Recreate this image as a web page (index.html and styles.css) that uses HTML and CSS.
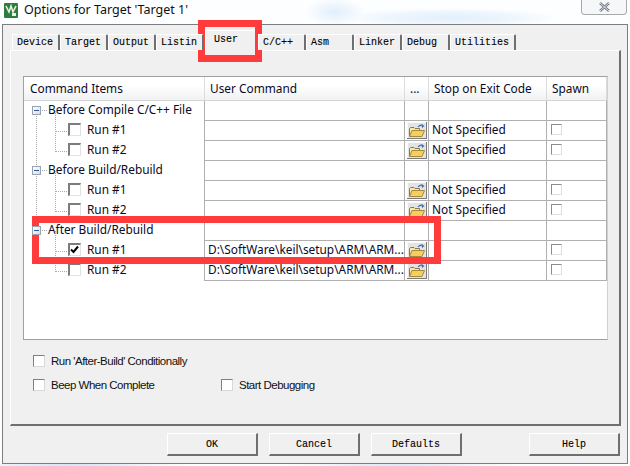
FILE: index.html
```html
<!DOCTYPE html>
<html lang="en">
<head>
<meta charset="utf-8">
<title>Options for Target</title>
<link rel="stylesheet" href="styles.css">
</head>
<body>
<svg width="0" height="0" class="defs">
  <symbol id="folder" viewBox="0 0 20 17">
    <rect x="0.5" y="0.5" width="19" height="16" fill="#e4e4e4"/>
    <path d="M0 0.5H20M0.5 0V17" stroke="#fafafa" stroke-width="1" fill="none"/>
    <path d="M19.5 0V17M0 16.5H20" stroke="#7a7a7a" stroke-width="1" fill="none"/>
    <path d="M2.5 14.5V6.5L3.5 5.5H7L8 6.5H12.5V8.5" fill="#f8e8a8" stroke="#8a7a4a"/>
    <path d="M2.5 14.5L5 8.5H17.5L15 14.5Z" fill="#f6cf5e" stroke="#a58a3e"/>
    <path d="M11 5Q13 2.5 16 3.5" fill="none" stroke="#3d6fb4" stroke-width="1.2"/>
    <path d="M14.5 2L17.5 4L15 6Z" fill="#3d6fb4"/>
  </symbol>
</svg>

<div class="titlebar">
  <svg class="app-icon" width="14" height="15" viewBox="0 0 14 15">
    <rect width="14" height="15" rx="1" fill="#2c7d3f"/>
    <path d="M2 3L5 9L7 3L9 9L12 3" fill="none" stroke="#e8f4e0" stroke-width="1.6"/>
    <rect x="8" y="10" width="4" height="3" fill="#e8f4e0"/>
  </svg>
  <span class="title">Options for Target 'Target 1'</span>
  <span class="close">
    <svg width="11" height="10" viewBox="0 0 11 10"><path d="M1 1L10 9M10 1L1 9" stroke="#6d7680" stroke-width="2.4"/><path d="M1 1L10 9M10 1L1 9" stroke="#fff" stroke-width="0.8"/></svg>
  </span>
</div>

<main class="dialog">
  <nav class="tabs">
    <span class="tab">Device</span>
    <span class="tab">Target</span>
    <span class="tab">Output</span>
    <span class="tab">Listin</span>
    <span class="tab active">User</span>
    <span class="tab">C/C++</span>
    <span class="tab">Asm</span>
    <span class="tab">Linker</span>
    <span class="tab">Debug</span>
    <span class="tab wide">Utilities</span>
  </nav>

  <section class="panel">
    <div class="grid-box">
      <div class="row head">
        <div class="c c1">Command Items</div>
        <div class="c c2">User Command</div>
        <div class="c c3">...</div>
        <div class="c c4">Stop on Exit Code</div>
        <div class="c c5">Spawn</div>
      </div>
      <span class="trunk"></span>

      <div class="row">
        <div class="c c1 group"><span class="exp"></span>Before Compile C/C++ File</div>
        <div class="c c2"></div><div class="c c3"></div><div class="c c4"></div><div class="c c5"></div>
      </div>
      <div class="row">
        <div class="c c1 item first"><span class="cb"></span>Run #1</div>
        <div class="c c2"></div>
        <div class="c c3"><svg class="fld"><use href="#folder"/></svg></div>
        <div class="c c4">Not Specified</div>
        <div class="c c5"><span class="scb"></span></div>
      </div>
      <div class="row">
        <div class="c c1 item"><span class="cb"></span>Run #2</div>
        <div class="c c2"></div>
        <div class="c c3"><svg class="fld"><use href="#folder"/></svg></div>
        <div class="c c4">Not Specified</div>
        <div class="c c5"><span class="scb"></span></div>
      </div>

      <div class="row">
        <div class="c c1 group"><span class="exp"></span>Before Build/Rebuild</div>
        <div class="c c2"></div><div class="c c3"></div><div class="c c4"></div><div class="c c5"></div>
      </div>
      <div class="row">
        <div class="c c1 item first"><span class="cb"></span>Run #1</div>
        <div class="c c2"></div>
        <div class="c c3"><svg class="fld"><use href="#folder"/></svg></div>
        <div class="c c4">Not Specified</div>
        <div class="c c5"><span class="scb"></span></div>
      </div>
      <div class="row">
        <div class="c c1 item"><span class="cb"></span>Run #2</div>
        <div class="c c2"></div>
        <div class="c c3"><svg class="fld"><use href="#folder"/></svg></div>
        <div class="c c4">Not Specified</div>
        <div class="c c5"><span class="scb"></span></div>
      </div>

      <div class="row">
        <div class="c c1 group"><span class="exp"></span>After Build/Rebuild</div>
        <div class="c c2"></div><div class="c c3"></div><div class="c c4"></div><div class="c c5"></div>
      </div>
      <div class="row">
        <div class="c c1 item first"><span class="cb checked"><svg width="9" height="9" viewBox="0 0 9 9"><path d="M1 4.5L3.5 7L8 1.5" fill="none" stroke="#000" stroke-width="2"/></svg></span>Run #1</div>
        <div class="c c2">D:\SoftWare\keil\setup\ARM\ARM...</div>
        <div class="c c3"><svg class="fld"><use href="#folder"/></svg></div>
        <div class="c c4"></div>
        <div class="c c5"><span class="scb"></span></div>
      </div>
      <div class="row">
        <div class="c c1 item"><span class="cb"></span>Run #2</div>
        <div class="c c2">D:\SoftWare\keil\setup\ARM\ARM...</div>
        <div class="c c3"><svg class="fld"><use href="#folder"/></svg></div>
        <div class="c c4"></div>
        <div class="c c5"><span class="scb"></span></div>
      </div>
    </div>

    <div class="options">
      <label class="opt"><span class="ocb"></span>Run 'After-Build' Conditionally</label>
      <div class="opt-row">
        <label class="opt beep"><span class="ocb"></span>Beep When Complete</label>
        <label class="opt"><span class="ocb"></span>Start Debugging</label>
      </div>
    </div>
  </section>

  <footer class="buttons">
    <button class="btn">OK</button>
    <button class="btn">Cancel</button>
    <button class="btn">Defaults</button>
    <button class="btn help">Help</button>
  </footer>
</main>

<span class="mark mark-tab"></span>
<span class="mark mark-row"></span>
</body>
</html>
```
FILE: styles.css
```css
* { box-sizing: border-box; }
html, body { margin: 0; padding: 0; }
body {
  position: relative;
  width: 630px;
  height: 466px;
  overflow: hidden;
  background-color: #fdfeff;
  background-image:
    radial-gradient(ellipse 110px 10px at 450px 18px, #e2effc 0%, #eef6fd 60%, transparent 100%),
    radial-gradient(ellipse 30px 14px at 335px 12px, #e0eefb 0%, transparent 100%),
    radial-gradient(ellipse 120px 3px at 70px 465px, #cfe3f7 0%, transparent 100%),
    radial-gradient(ellipse 120px 3px at 400px 465px, #d6e6f8 0%, transparent 100%);
  font-family: "Noto Sans", sans-serif;
  color: #000;
}
.defs { position: absolute; }
.titlebar {
  height: 24px;
  display: flex;
  align-items: flex-start;
  padding-left: 4px;
}
.app-icon { margin-top: 3px; }
.title {
  margin-left: 6px;
  margin-top: 1px;
  font-size: 12.5px;
  line-height: 18px;
  color: #111;
}
.close {
  margin-left: auto;
  margin-right: 3px;
  width: 46px;
  height: 15px;
  border: 1px solid #a9a9a9;
  border-top: 0;
  border-radius: 0 0 4px 4px;
  background: #f6f7f8;
  display: flex;
  align-items: center;
  justify-content: center;
}
.dialog {
  margin: 0 2px 0 2px;
  height: 440px;
  background: #f0f0f0;
  border: 1px solid #7d7d7d;
  padding: 8px 6px 0 7px;
}
.tabs {
  display: flex;
  height: 17px;
  padding-left: 2px;
  align-items: flex-end;
  position: relative;
  z-index: 1;
}
.tab {
  width: 48px;
  height: 16px;
  padding-left: 4px;
  background: #f0f0f0;
  border-top: 1px solid #fff;
  border-left: 1px solid #fff;
  border-right: 2px solid #6f6f6f;
  border-top-right-radius: 2px;
  font-family: "Liberation Mono", monospace;
  font-size: 10px;
  line-height: 15px;
  white-space: nowrap;
  overflow: hidden;
  -webkit-text-stroke: 0.1px #000;
}
.tab.active {
  width: 50px;
  height: 22px;
  margin-left: 1px;
  margin-right: 3px;
  padding-left: 8px;
  line-height: 18px;
  margin-bottom: -2px;
  border-right: 0;
}
.tab.wide { width: 66px; }
.panel {
  height: 376px;
  border-top: 1px solid #fff;
  border-left: 1px solid #fff;
  border-right: 2px solid #6f6f6f;
  border-bottom: 2px solid #6f6f6f;
  padding: 25px 11px 0 12px;
}
.grid-box {
  position: relative;
  height: 264px;
  width: 585px;
  background: #fff;
  border: 1px solid #a0a0a0;
  border-right-color: #d0d0d0;
  font-size: 11.85px;
  color: #0a0a28;
}
.row {
  display: grid;
  grid-template-columns: 181px 200px 24px 118px 60px;
  height: 20px;
}
.row.head {
  height: 24px;
  background: linear-gradient(#fff 0%, #fff 35%, #f1f3f5 90%);
  border-bottom: 1px solid #d4d4d4;
}
.c {
  border-right: 1px solid #b0b0b0;
  border-bottom: 1px solid #b0b0b0;
  line-height: 17px;
  padding-left: 3px;
  position: relative;
  white-space: nowrap;
  overflow: visible;
}
.head .c {
  line-height: 23px;
  border-bottom: 0;
  border-right-color: #dcdcdc;
  padding-left: 5px;
}
.head .c1 { padding-left: 6px; }
.c1 { border-bottom: 0; }
.trunk {
  position: absolute;
  left: 12px;
  top: 39px;
  height: 115px;
  border-left: 1px dotted #a8a8a8;
}
.group { padding-left: 24px; }
.group::before {
  content: "";
  position: absolute;
  left: 16px;
  top: 9px;
  width: 7px;
  border-top: 1px dotted #a8a8a8;
}
.exp {
  position: absolute;
  z-index: 1;
  left: 8px;
  top: 5px;
  width: 9px;
  height: 9px;
  border: 1px solid #9aa3ad;
  background: linear-gradient(135deg, #fff, #d8dde4);
}
.exp::after {
  content: "";
  position: absolute;
  left: 1px;
  top: 3px;
  width: 5px;
  height: 1px;
  background: #2f5aa0;
}
.item { padding-left: 63px; }
.item::before {
  content: "";
  position: absolute;
  left: 31px;
  top: -10px;
  width: 13px;
  height: 20px;
  border-left: 1px dotted #a8a8a8;
  border-bottom: 1px dotted #a8a8a8;
}
.cb {
  position: absolute;
  left: 44px;
  top: 2px;
  width: 13px;
  height: 13px;
  background: #fff;
  border: 2px solid #7c7c7c;
  border-right: 1px solid #e2e2e2;
  border-bottom: 1px solid #e2e2e2;
  display: flex;
}
.c3 { padding: 1px 0 0 2px; }
.head .c3 { padding: 0 0 0 5px; }
.fld { width: 20px; height: 17px; display: block; }
.scb {
  display: block;
  width: 11px;
  height: 11px;
  margin: 3px 0 0;
  border: 1px solid #8c8c8c;
  border-right-color: #dedede;
  border-bottom-color: #dedede;
  background: #fff;
}
.c5 { padding-left: 4px; }
.options {
  margin-top: 14px;
  padding-left: 10px;
  font-family: "Liberation Sans", sans-serif;
  font-size: 11.5px;
  color: #111;
  display: flex;
  flex-direction: column;
  gap: 10px;
}
.opt-row { display: flex; }
.opt {
  display: flex;
  align-items: center;
  height: 14px;
  letter-spacing: -0.5px;
}
.beep { width: 188px; }
.ocb {
  width: 12px;
  height: 12px;
  margin-right: 6px;
  background: #fff;
  border: 1px solid #7f7f7f;
  border-right-color: #d8d8d8;
  border-bottom-color: #d8d8d8;
}
.buttons {
  display: flex;
  gap: 11px;
  padding: 7px 0 0 157px;
}
.btn {
  width: 91px;
  height: 23px;
  padding: 0;
  background: #f0f0f0;
  border: 1px solid #fff;
  border-right: 2px solid #6f6f6f;
  border-bottom: 2px solid #6f6f6f;
  font-family: "Liberation Mono", monospace;
  font-size: 10px;
  color: #000;
  -webkit-text-stroke: 0.1px #000;
}
.help { margin-left: 56px; }
.mark {
  position: absolute;
  border: 7px solid #ff3b3b;
  pointer-events: none;
}
.mark-tab { left: 198px; top: 20px; width: 64px; height: 42px; }
.mark-row { left: 32px; top: 216px; width: 409px; height: 48px; }
```
